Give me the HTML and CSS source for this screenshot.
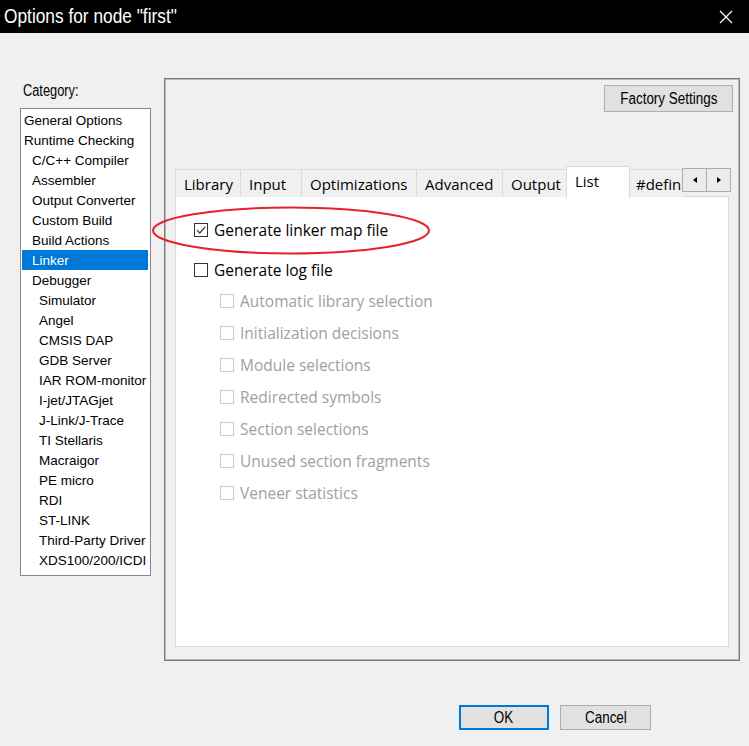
FILE: index.html
```html
<!DOCTYPE html>
<html>
<head>
<meta charset="utf-8">
<link rel="stylesheet" href="styles.css">
</head>
<body>
<div class="window">
  <div class="titlebar">
    <span class="title narrow">Options for node "first"</span>
    <svg class="close" width="14" height="14" viewBox="0 0 14 14"><path d="M1 1 L13 13 M13 1 L1 13" stroke="#fff" stroke-width="1.2" fill="none"/></svg>
  </div>
  <div class="content">
    <div class="sidebar">
      <div class="cat-label"><span class="narrow">Category:</span></div>
      <ul class="cat-list">
        <li class="l0">General Options</li>
        <li class="l0">Runtime Checking</li>
        <li class="l1">C/C++ Compiler</li>
        <li class="l1">Assembler</li>
        <li class="l1">Output Converter</li>
        <li class="l1">Custom Build</li>
        <li class="l1">Build Actions</li>
        <li class="l1 selected">Linker</li>
        <li class="l1">Debugger</li>
        <li class="l2">Simulator</li>
        <li class="l2">Angel</li>
        <li class="l2">CMSIS DAP</li>
        <li class="l2">GDB Server</li>
        <li class="l2">IAR ROM-monitor</li>
        <li class="l2">I-jet/JTAGjet</li>
        <li class="l2">J-Link/J-Trace</li>
        <li class="l2">TI Stellaris</li>
        <li class="l2">Macraigor</li>
        <li class="l2">PE micro</li>
        <li class="l2">RDI</li>
        <li class="l2">ST-LINK</li>
        <li class="l2">Third-Party Driver</li>
        <li class="l2">XDS100/200/ICDI</li>
      </ul>
    </div>
    <div class="panel">
      <div class="panel-top"><button class="btn factory"><span class="narrow">Factory Settings</span></button></div>
      <div class="tabbar">
        <div class="tabs-viewport">
          <div class="tab t-library">Library</div>
          <div class="tab t-input">Input</div>
          <div class="tab t-opt">Optimizations</div>
          <div class="tab t-adv">Advanced</div>
          <div class="tab t-output">Output</div>
          <div class="tab t-list active">List</div>
          <div class="tab t-define">#defin</div>
        </div>
        <div class="scroll-btns">
          <div class="sbtn"><span class="arrow-left"></span></div>
          <div class="sbtn"><span class="arrow-right"></span></div>
        </div>
      </div>
      <div class="page">
        <div class="row main first">
          <span class="cb"><svg width="12" height="12" viewBox="0 0 12 12"><path d="M2 6.2 L4.8 9 L10.2 2.8" stroke="#333" stroke-width="1.2" fill="none"/></svg></span>
          <span class="label">Generate linker map file</span>
        </div>
        <div class="row main second">
          <span class="cb"></span>
          <span class="label">Generate log file</span>
        </div>
        <div class="row sub disabled"><span class="cb"></span><span class="label">Automatic library selection</span></div>
        <div class="row sub disabled"><span class="cb"></span><span class="label">Initialization decisions</span></div>
        <div class="row sub disabled"><span class="cb"></span><span class="label">Module selections</span></div>
        <div class="row sub disabled"><span class="cb"></span><span class="label">Redirected symbols</span></div>
        <div class="row sub disabled"><span class="cb"></span><span class="label">Section selections</span></div>
        <div class="row sub disabled"><span class="cb"></span><span class="label">Unused section fragments</span></div>
        <div class="row sub disabled"><span class="cb"></span><span class="label">Veneer statistics</span></div>
        <svg class="annot" width="280" height="50" viewBox="0 0 280 50"><ellipse cx="140" cy="24.5" rx="138" ry="23" stroke="#e5232a" stroke-width="2" fill="none"/></svg>
      </div>
    </div>
  </div>
  <div class="footer">
    <button class="btn ok"><span class="narrow">OK</span></button>
    <button class="btn cancel"><span class="narrow">Cancel</span></button>
  </div>
</div>
</body>
</html>
```

FILE: styles.css
```css
html, body {
  margin: 0;
  padding: 0;
  background: #f0f0f0;
}
.window {
  width: 749px;
  height: 746px;
  background: #f0f0f0;
  overflow: hidden;
}
.narrow {
  display: inline-block;
  transform: scaleX(0.82);
  transform-origin: center;
  white-space: nowrap;
}
.titlebar {
  height: 33px;
  background: #000;
  display: flex;
  align-items: center;
  justify-content: space-between;
  padding: 0 16px 0 4px;
  box-sizing: border-box;
}
.title {
  color: #fff;
  font-family: "Liberation Sans", Arial, sans-serif;
  font-size: 20px;
  line-height: 33px;
  transform: scaleX(0.865);
  transform-origin: left center;
}
.close {
  display: block;
}
.content {
  display: flex;
  align-items: flex-start;
}
.sidebar {
  margin-left: 20px;
  width: 131px;
  padding-top: 49px;
}
.cat-label {
  font-family: "Liberation Sans", Arial, sans-serif;
  font-size: 16px;
  line-height: 18px;
  height: 18px;
  padding-left: 3px;
  color: #000;
  margin-bottom: 8px;
}
.cat-label .narrow {
  transform: scaleX(0.8);
  transform-origin: left center;
}
.cat-list {
  list-style: none;
  margin: 0;
  padding: 1px 0 0 0;
  height: 468px;
  box-sizing: border-box;
  border: 1px solid #828790;
  background: #fff;
}
.cat-list li {
  height: 20px;
  line-height: 21px;
  margin: 0 2px 0 1px;
  font-family: "Liberation Sans", Arial, sans-serif;
  font-size: 13.5px;
  color: #000;
  white-space: nowrap;
}
.cat-list li.l0 { padding-left: 2px; }
.cat-list li.l1 { padding-left: 10px; }
.cat-list li.l2 { padding-left: 17px; }
.cat-list li.selected {
  background: #0078d7;
  color: #fff;
}
.panel {
  margin-left: 13px;
  margin-top: 45px;
  width: 576px;
  height: 583px;
  box-sizing: border-box;
  border: 1px solid #7a7a7a;
  box-shadow: inset 0 0 0 1px #b9b9b9;
  display: flex;
  flex-direction: column;
}
.panel-top {
  display: flex;
  justify-content: flex-end;
  padding: 6px 6px 0 0;
  height: 27px;
}
.btn {
  font-family: "Liberation Sans", Arial, sans-serif;
  font-size: 16px;
  color: #000;
  background: #e1e1e1;
  border: 1px solid #adadad;
  padding: 0;
  margin: 0;
  box-sizing: border-box;
}
.btn .narrow {
  transform: scaleX(0.84);
}
.factory {
  width: 129px;
  height: 27px;
}
.tabbar {
  margin-top: 54px;
  margin-left: 10px;
  height: 31px;
  display: flex;
  position: relative;
  z-index: 1;
  margin-bottom: -1px;
}
.tabs-viewport {
  width: 507px;
  height: 32px;
  overflow: hidden;
  display: flex;
  align-items: flex-start;
}
.tab {
  flex: none;
  height: 28px;
  margin-top: 3px;
  box-sizing: border-box;
  border: 1px solid #d9d9d9;
  border-bottom: none;
  margin-left: -1px;
  background: #f0f0f0;
  font-family: "Open Sans", "Noto Sans", sans-serif;
  font-size: 15px;
  line-height: 28px;
  padding-left: 8px;
  color: #000;
  white-space: nowrap;
}
.tab:first-child { margin-left: 0; }
.t-library { width: 66px; }
.t-input { width: 62px; }
.t-opt { width: 116px; }
.t-adv { width: 87px; }
.t-output { width: 65px; }
.t-list {
  width: 64px;
  height: 32px;
  margin-top: 0;
  background: #fff;
  line-height: 28px;
  position: relative;
  z-index: 2;
}
.t-define {
  width: 53px;
  padding-left: 6px;
  border-left: none;
  border-right: none;
  margin-left: 0;
  overflow: visible;
}
.scroll-btns {
  display: flex;
  margin-top: 2px;
  height: 24px;
}
.sbtn {
  width: 25px;
  height: 24px;
  box-sizing: border-box;
  border: 1px solid #adadad;
  background: #ececec;
  display: flex;
  align-items: center;
  justify-content: center;
}
.sbtn + .sbtn { margin-left: -1px; }
.arrow-left {
  width: 0; height: 0;
  border-top: 3.5px solid transparent;
  border-bottom: 3.5px solid transparent;
  border-right: 4px solid #000;
}
.arrow-right {
  width: 0; height: 0;
  border-top: 3.5px solid transparent;
  border-bottom: 3.5px solid transparent;
  border-left: 4px solid #000;
}
.page {
  position: relative;
  margin-left: 10px;
  width: 554px;
  height: 451px;
  box-sizing: border-box;
  border: 1px solid #d9d9d9;
  background: #fff;
  padding-top: 17px;
}
.row {
  display: flex;
  align-items: center;
  height: 32px;
  font-family: "Open Sans", "Noto Sans", sans-serif;
  font-size: 15.5px;
  color: #000;
  white-space: nowrap;
}
.row.main { padding-left: 18px; }
.row.second { margin-top: 8px; height: 31px; }
.row.sub { padding-left: 44px; }
.cb {
  width: 14px;
  height: 14px;
  box-sizing: border-box;
  border: 1px solid #333;
  background: #fff;
  margin-right: 6px;
  flex: none;
  display: flex;
  align-items: center;
  justify-content: center;
}
.cb svg { display: block; }
.row.disabled { color: #a0a0a0; }
.row.disabled .cb { border-color: #cccccc; }
.annot {
  position: absolute;
  left: -25px;
  top: 9px;
  overflow: visible;
}
.footer {
  display: flex;
  justify-content: flex-end;
  padding-right: 98px;
  margin-top: 44px;
  gap: 11px;
}
.ok {
  width: 90px;
  height: 25px;
  border: 2px solid #0078d7;
}
.cancel {
  width: 91px;
  height: 25px;
}
```
